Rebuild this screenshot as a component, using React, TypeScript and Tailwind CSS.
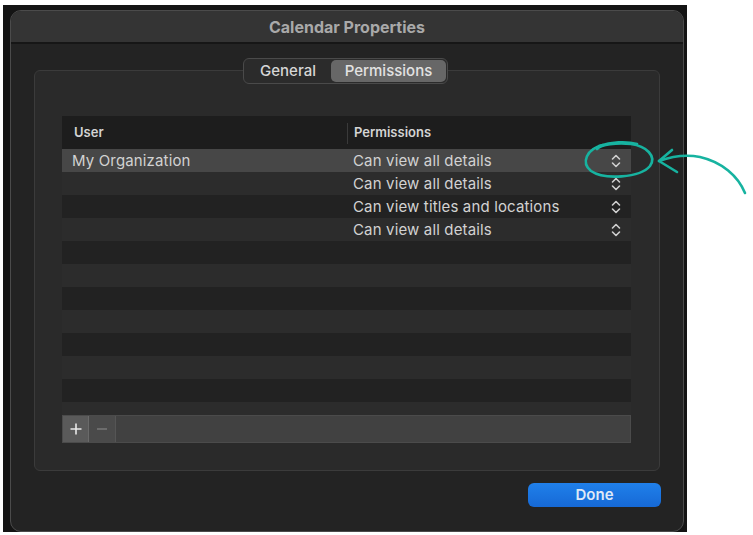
import React from 'react'

const font = { fontFamily: 'Inter, "Liberation Sans", Arial, sans-serif' }

const rows = [
  { user: 'My Organization', perm: 'Can view all details' },
  { user: '', perm: 'Can view all details' },
  { user: '', perm: 'Can view titles and locations' },
  { user: '', perm: 'Can view all details' },
]

function Stepper() {
  return (
    <svg width="10" height="14" viewBox="0 0 10 14" fill="none" stroke="#cfcfcf" strokeWidth="1.6" strokeLinecap="round" strokeLinejoin="round">
      <path d="M1.5 5 L5 1.5 L8.5 5" />
      <path d="M1.5 9 L5 12.5 L8.5 9" />
    </svg>
  )
}

function Annotation() {
  // hand-drawn teal circle + arrow pointing at the first stepper
  return (
    <svg className="absolute left-0 top-0 pointer-events-none" width="753" height="535" viewBox="0 0 753 535" fill="none" stroke="#17b3a0" strokeWidth="2.6" strokeLinecap="round" strokeLinejoin="round">
      <path d="M603 145 C 586 149, 581 163, 591 171 C 604 180, 640 178, 650 166 C 657 156, 646 146, 631 144 C 616 142, 601 145, 597 149" />
      <path d="M599 146 C 611 142, 626 141, 637 144" />
      <path d="M745 193 C 738 176, 722 162, 700 157 C 685 154, 670 157, 659 161" />
      <path d="M672 150 L 659 161 L 677 172" />
    </svg>
  )
}

export default function App() {
  const bodyRows = Array.from({ length: 12 }, (_, i) => rows[i] ?? null)
  return (
    <div className="relative w-[753px] h-[535px] bg-white overflow-hidden" style={font}>
      <div className="ml-[3px] mt-[5px] w-[684px] h-[527px] bg-[#141414] pl-[7px] pt-[5px]">
        <div className="w-[674px] h-[522px] rounded-[11px] border border-[#4b4b4b] bg-[#232323] flex flex-col overflow-hidden">
          <div className="h-[33px] shrink-0 bg-[#343434] border-b-2 border-[#161616] flex items-center justify-center pt-[1px]">
            <span className="text-[16px] font-bold text-[#a9a9a9]">Calendar Properties</span>
          </div>

          <div className="flex-1 flex flex-col px-[23px]">
            <div className="relative z-10 mt-[14px] self-center flex h-[26px] rounded-[6px] border border-[#4a4a4a] bg-[#2b2b2b] p-[1px] ml-[-3px]">
              <div className="w-[86px] flex items-center justify-center text-[15px] font-medium text-[#d6d6d6]">General</div>
              <div className="w-[115px] flex items-center justify-center rounded-[5px] bg-[#676767] text-[15px] font-medium text-[#e2e2e2]">Permissions</div>
            </div>

            <div className="mt-[-14px] h-[401px] rounded-[6px] border border-[#3b3b3b] bg-[#2a2a2a] pt-[45px] pl-[27px] pr-[27px]">
              <div className="w-[569px] flex flex-col">
                <div className="h-[33px] bg-[#1d1d1d] flex items-center text-[13px] font-semibold text-[#d4d4d4] pt-[1px]">
                  <div className="w-[285px] pl-[12px]">User</div>
                  <div className="h-[21px] w-px bg-[#3a3a3a]" />
                  <div className="pl-[6px]">Permissions</div>
                </div>
                <div className="h-[266px] overflow-hidden flex flex-col">
                  {bodyRows.map((r, i) => (
                    <div
                      key={i}
                      className={`h-[23px] shrink-0 flex items-center text-[15px] tracking-[0.15px] text-[#d2d2d2] ${
                        i === 0 ? 'bg-[#474747]' : i % 2 === 1 ? 'bg-[#2c2c2c]' : 'bg-[#222222]'
                      }`}
                    >
                      <div className="w-[291px] pl-[10px] pt-[2px]">{r?.user}</div>
                      {r && (
                        <>
                          <div className="flex-1 pt-[2px]">{r.perm}</div>
                          <div className="w-[20px] flex items-center pt-[1px]">
                            <Stepper />
                          </div>
                        </>
                      )}
                    </div>
                  ))}
                </div>
                <div className="h-[28px] flex border border-[#4b4b4b] bg-[#414141]">
                  <div className="w-[26px] flex items-center justify-center bg-[#5a5a5a] border-r border-[#6a6a6a]">
                    <svg width="12" height="12" viewBox="0 0 12 12" stroke="#e8e8e8" strokeWidth="1.6"><path d="M6 0.5 V11.5 M0.5 6 H11.5" /></svg>
                  </div>
                  <div className="w-[27px] flex items-center justify-center bg-[#4a4a4a] border-r border-[#555555]">
                    <svg width="12" height="12" viewBox="0 0 12 12" stroke="#7c7c7c" strokeWidth="1.4"><path d="M1 6 H11" /></svg>
                  </div>
                </div>
              </div>
            </div>

            <div className="mt-[12px] self-end mr-[-1px] w-[133px] h-[24px] rounded-[6px] bg-gradient-to-b from-[#2080ea] to-[#1669d6] flex items-center justify-center text-[15px] font-semibold text-[#dfe9f7]">
              Done
            </div>
          </div>
        </div>
      </div>
      <Annotation />
    </div>
  )
}
